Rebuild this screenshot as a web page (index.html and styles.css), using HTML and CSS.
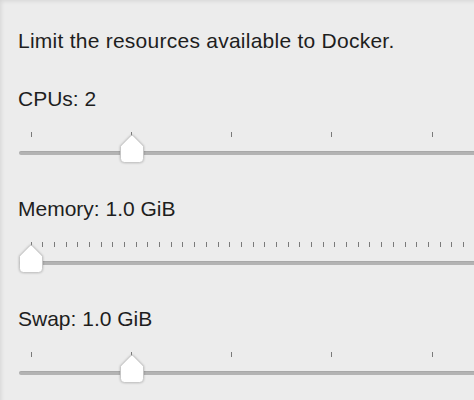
FILE: index.html
```html
<!DOCTYPE html>
<html lang="en">
<head>
<meta charset="utf-8">
<title>Docker Resources</title>
<link rel="stylesheet" href="styles.css">
</head>
<body>
<main class="pane">
  <p class="intro">Limit the resources available to Docker.</p>

  <section class="setting">
    <div class="label">CPUs: 2</div>
    <div class="slider" data-ticks="8">
      <div class="ticks">
        <i></i><i></i><i></i><i></i><i></i><i></i><i></i><i></i>
      </div>
      <div class="track"></div>
      <svg class="thumb" style="left: 101px" width="26" height="30" viewBox="0 0 26 30" aria-hidden="true">
        <path d="M13 1.2 Q13.6 1.2 14.2 1.8 L24.5 12.2 L24.5 24.5 Q24.5 28.5 20.5 28.5 L5.5 28.5 Q1.5 28.5 1.5 24.5 L1.5 12.2 L11.8 1.8 Q12.4 1.2 13 1.2 Z" />
      </svg>
    </div>
  </section>

  <section class="setting">
    <div class="label">Memory: 1.0 GiB</div>
    <div class="slider">
      <div class="ticks">
        <i></i><i></i><i></i><i></i><i></i><i></i><i></i><i></i><i></i><i></i>
        <i></i><i></i><i></i><i></i><i></i><i></i><i></i><i></i><i></i><i></i>
        <i></i><i></i><i></i><i></i><i></i><i></i><i></i><i></i><i></i><i></i>
        <i></i><i></i><i></i><i></i><i></i><i></i><i></i><i></i><i></i><i></i>
        <i></i><i></i><i></i><i></i><i></i><i></i><i></i><i></i><i></i><i></i>
        <i></i><i></i><i></i><i></i><i></i><i></i><i></i><i></i><i></i><i></i>
        <i></i>
      </div>
      <div class="track"></div>
      <svg class="thumb" style="left: 0px" width="26" height="30" viewBox="0 0 26 30" aria-hidden="true">
        <path d="M13 1.2 Q13.6 1.2 14.2 1.8 L24.5 12.2 L24.5 24.5 Q24.5 28.5 20.5 28.5 L5.5 28.5 Q1.5 28.5 1.5 24.5 L1.5 12.2 L11.8 1.8 Q12.4 1.2 13 1.2 Z" />
      </svg>
    </div>
  </section>

  <section class="setting">
    <div class="label">Swap: 1.0 GiB</div>
    <div class="slider">
      <div class="ticks">
        <i></i><i></i><i></i><i></i><i></i><i></i><i></i><i></i>
      </div>
      <div class="track"></div>
      <svg class="thumb" style="left: 101px" width="26" height="30" viewBox="0 0 26 30" aria-hidden="true">
        <path d="M13 1.2 Q13.6 1.2 14.2 1.8 L24.5 12.2 L24.5 24.5 Q24.5 28.5 20.5 28.5 L5.5 28.5 Q1.5 28.5 1.5 24.5 L1.5 12.2 L11.8 1.8 Q12.4 1.2 13 1.2 Z" />
      </svg>
    </div>
  </section>
</main>
</body>
</html>
```

FILE: styles.css
```css
html, body {
  margin: 0;
  padding: 0;
  height: 100%;
  overflow: hidden;
  background: #ececec;
}

.pane {
  height: 100%;
  box-sizing: border-box;
  padding: 29px 0 0 18px;
  font-family: "Liberation Sans", Arial, sans-serif;
  font-size: 21px;
  line-height: 24px;
  color: #1e1e1e;
  box-shadow: inset 3px 3px 4px -2px rgba(0, 0, 0, 0.10);
}

.intro {
  margin: 0 0 34px 0;
  letter-spacing: 0.25px;
}

.setting {
  margin-bottom: 33px;
}

.label {
  margin-bottom: 21px;
}

.slider {
  position: relative;
  width: 726px;
  height: 32px;
  margin-left: 1px;
}

.ticks {
  display: flex;
  justify-content: space-between;
  padding: 0 11.5px;
  height: 5px;
}

.ticks i {
  display: block;
  width: 1px;
  height: 5px;
  background: #7a7a7a;
}

.track {
  margin-top: 14px;
  height: 4px;
  border-radius: 2px;
  background: #b3b3b3;
  box-shadow: inset 0 1px 0 rgba(0, 0, 0, 0.06);
}

.thumb {
  position: absolute;
  top: 2px;
  margin-left: -1px;
  overflow: visible;
  filter: drop-shadow(0 0.5px 0.8px rgba(0, 0, 0, 0.25));
}

.thumb path {
  fill: #ffffff;
  stroke: #c2c2c2;
  stroke-width: 0.8;
}
```
